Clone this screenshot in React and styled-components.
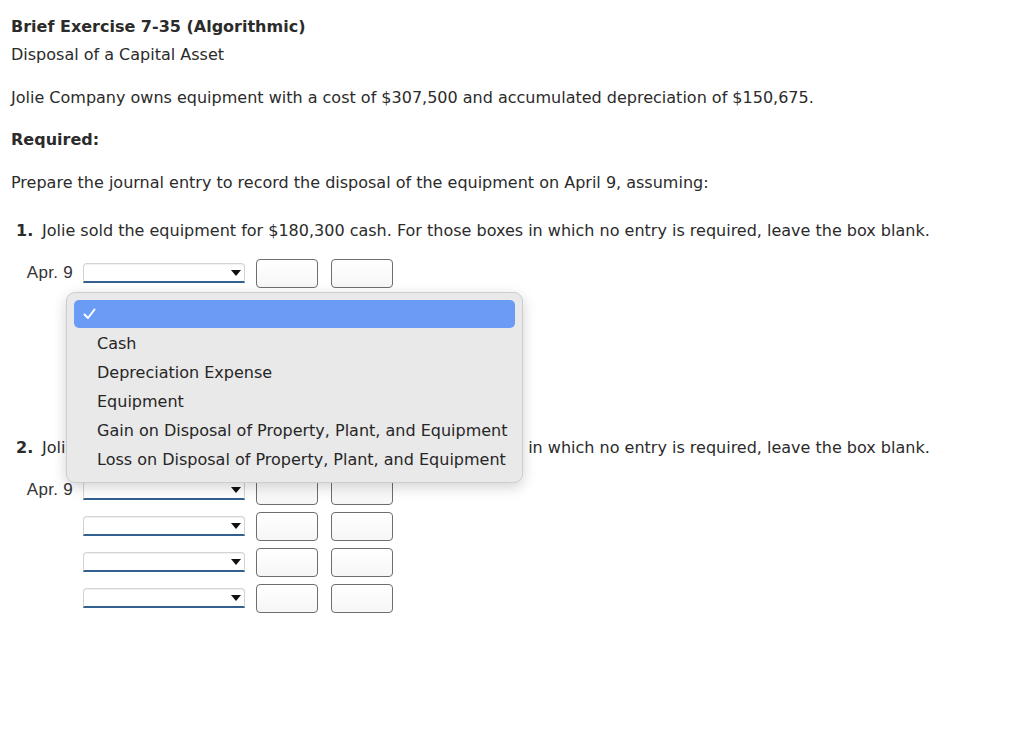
import React from "react";
import styled, { createGlobalStyle } from "styled-components";

const GlobalStyle = createGlobalStyle`
  body {
    margin: 0;
    background: #fff;
    font-family: "DejaVu Sans", Verdana, sans-serif;
    color: #2b2b2b;
  }
`;

const Page = styled.div`
  padding: 17px 0 0 11px;
  font-size: 16px;
  line-height: 20px;
`;

const Title = styled.h1`
  margin: 0;
  font-size: 16px;
  font-weight: bold;
  line-height: 20px;
`;

const Text = styled.p`
  margin: ${({ $top }) => $top || 0}px 0 0;
  font-weight: ${({ $bold }) => ($bold ? "bold" : "normal")};
`;

const Part = styled.div`
  margin-top: ${({ $top }) => $top}px;
`;

const Question = styled.div`
  display: flex;
  padding-left: 5px;
  b {
    width: 26px;
    flex: none;
  }
`;

const Rows = styled.div`
  position: relative;
  display: flex;
  flex-direction: column;
  gap: 6px;
  margin-top: 17px;
`;

const Row = styled.div`
  display: flex;
  align-items: center;
  height: 30px;
`;

const DateCell = styled.div`
  width: 62px;
  text-align: right;
  font-family: "Liberation Sans", Arial, sans-serif;
  font-size: 17px;
  letter-spacing: 0.3px;
  color: #333;
`;

const Select = styled.div`
  position: relative;
  margin-left: 10px;
  width: 160px;
  height: 17px;
  background: #fff;
  border: 1px solid #d3d3d3;
  border-bottom: 2px solid #34608f;
  border-radius: 4px 4px 0 0;
  box-shadow: inset 0 1px 1px rgba(0, 0, 0, 0.06);
  &::after {
    content: "";
    position: absolute;
    right: 3px;
    top: 6px;
    border-left: 5px solid transparent;
    border-right: 5px solid transparent;
    border-top: 6px solid #111;
  }
`;

const Box = styled.div`
  margin-left: ${({ $gap }) => $gap}px;
  width: 60px;
  height: 27px;
  border: 1.5px solid #6e6e6e;
  border-radius: 4px;
  background: linear-gradient(#fff, #f6f6f6);
`;

const Menu = styled.div`
  position: absolute;
  left: 55px;
  top: 34px;
  z-index: 5;
  width: 441px;
  padding: 7px 7px 8px;
  background: #e9e9e9;
  border: 1px solid #cdcdcd;
  border-radius: 9px;
  box-shadow: 0 4px 14px rgba(0, 0, 0, 0.18);
  font-family: "DejaVu Sans", sans-serif;
  font-size: 16px;
  color: #262626;
`;

const Option = styled.div`
  position: relative;
  height: ${({ $active }) => ($active ? 28 : 29)}px;
  margin-bottom: ${({ $active }) => ($active ? 1 : 0)}px;
  line-height: ${({ $active }) => ($active ? 28 : 29)}px;
  padding-left: 23px;
  border-radius: 5px;
  white-space: nowrap;
  background: ${({ $active }) => ($active ? "#6a9cf6" : "transparent")};
  color: ${({ $active }) => ($active ? "#fff" : "#262626")};
`;

const Check = styled.svg`
  position: absolute;
  left: 9px;
  top: 8px;
`;

const options = [
  "Cash",
  "Depreciation Expense",
  "Equipment",
  "Gain on Disposal of Property, Plant, and Equipment",
  "Loss on Disposal of Property, Plant, and Equipment",
];

const JournalRows = ({ open }) => (
  <Rows>
    {[0, 1, 2, 3].map((i) => (
      <Row key={i}>
        <DateCell>{i === 0 ? "Apr. 9" : ""}</DateCell>
        <Select />
        <Box $gap={11} />
        <Box $gap={13} />
      </Row>
    ))}
    {open && (
      <Menu>
        <Option $active>
          <Check width="13" height="12" viewBox="0 0 13 12">
            <path d="M1.5 6.5 L5 10 L11.5 1.5" fill="none" stroke="#fff" strokeWidth="2" strokeLinecap="round" strokeLinejoin="round" />
          </Check>
        </Option>
        {options.map((o) => (
          <Option key={o}>{o}</Option>
        ))}
      </Menu>
    )}
  </Rows>
);

export default function App() {
  return (
    <Page>
      <GlobalStyle />
      <Title>Brief Exercise 7-35 (Algorithmic)</Title>
      <Text $top={8}>Disposal of a Capital Asset</Text>
      <Text $top={23}>
        Jolie Company owns equipment with a cost of $307,500 and accumulated depreciation of $150,675.
      </Text>
      <Text $top={22} $bold>Required:</Text>
      <Text $top={23}>
        Prepare the journal entry to record the disposal of the equipment on April 9, assuming:
      </Text>
      <Part $top={28}>
        <Question>
          <b>1.</b>
          <span>
            Jolie sold the equipment for $180,300 cash. For those boxes in which no entry is required, leave the box blank.
          </span>
        </Question>
        <JournalRows open />
      </Part>
      <Part $top={42}>
        <Question>
          <b>2.</b>
          <span>
            Jolie sold the equipment for $126,500 cash. For those boxes in which no entry is required, leave the box blank.
          </span>
        </Question>
        <JournalRows />
      </Part>
    </Page>
  );
}
